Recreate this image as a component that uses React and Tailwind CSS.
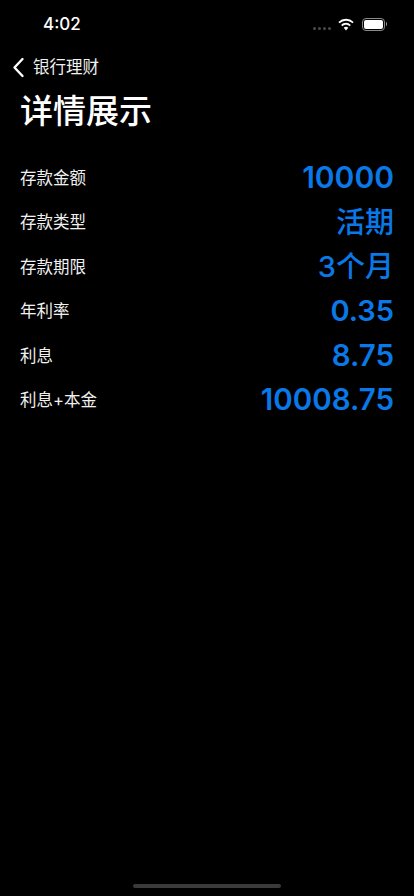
const rows = [
  ['存款金额', '10000', 'text-[30px] font-semibold'],
  ['存款类型', '活期', 'text-[29px] font-medium pt-[2px]'],
  ['存款期限', '3个月', 'text-[29px] font-medium'],
  ['年利率', '0.35', 'text-[29px] font-semibold'],
  ['利息', '8.75', 'text-[29.5px] font-semibold'],
  ['利息+本金', '10008.75', 'text-[29.5px] font-semibold'],
];

const StatusBar = () => (
  <div className="flex h-11 items-center justify-between pl-[43px] pr-[27px] pt-1">
    <span className="text-[17px] font-medium leading-none text-white">4:02</span>
    <div className="flex items-center">
      <div className="mr-[6px] mt-[8px] flex gap-[2px]">
        <span className="h-[3px] w-[3px] rounded-full bg-[#4a4a4a]" />
        <span className="h-[3px] w-[3px] rounded-full bg-[#4a4a4a]" />
        <span className="h-[3px] w-[3px] rounded-full bg-[#4a4a4a]" />
        <span className="h-[3px] w-[3px] rounded-full bg-[#4a4a4a]" />
      </div>
      <svg width="18" height="13" viewBox="0 0 16 11.5" className="mr-[7px]">
        <path d="M8 2.4c2.2 0 4.2.9 5.7 2.3l1.1-1.2A9.9 9.9 0 0 0 8 .7a9.9 9.9 0 0 0-6.8 2.8l1.1 1.2A8.2 8.2 0 0 1 8 2.4z" fill="#fff" />
        <path d="M8 6c1.2 0 2.3.5 3.2 1.3l1.1-1.2A6.2 6.2 0 0 0 8 4.3c-1.7 0-3.2.7-4.3 1.8l1.1 1.2C5.7 6.5 6.8 6 8 6z" fill="#fff" />
        <path d="M8 7.8c-.8 0-1.5.3-2 .8L8 11l2-2.4c-.5-.5-1.2-.8-2-.8z" fill="#fff" />
      </svg>
      <div className="flex items-center">
        <div className="h-[13px] w-[23px] rounded-[4px] border border-[#8a8a8a] p-[1px]">
          <div className="h-full w-full rounded-[2px] bg-white" />
        </div>
        <div className="ml-[1px] h-[4px] w-[1px] rounded-r-sm bg-[#8a8a8a]" />
      </div>
    </div>
  </div>
);

export default function App() {
  return (
    <div
      className="relative flex h-[896px] w-[414px] flex-col overflow-hidden bg-black text-white"
      style={{ fontFamily: 'Inter, "Noto Sans CJK SC", sans-serif' }}
    >
      <StatusBar />
      <div className="mt-[9px] flex h-[28px] items-center pl-[12px]">
        <svg width="13" height="21" viewBox="0 0 13 21" fill="none" stroke="#fff" strokeWidth="2.4" strokeLinecap="round" strokeLinejoin="round">
          <path d="M10.5 2 2.5 10.5l8 8.5" />
        </svg>
        <span className="ml-[8px] text-[16.5px] leading-none text-[#f0f0f0]">银行理财</span>
      </div>
      <h1 className="mt-[5px] pl-[20px] text-[33px] font-medium leading-[50px]">详情展示</h1>
      <div className="mt-[19px] flex flex-col px-[20px]">
        {rows.map(([label, value, size]) => (
          <div key={label} className="flex h-[44.5px] items-center justify-between">
            <span className="pt-[1px] text-[16.5px] leading-none text-[#f0f0f0]">{label}</span>
            <span className={`${size} leading-none text-[#0a78e6]`}>{value}</span>
          </div>
        ))}
      </div>
      <div className="absolute bottom-[8px] left-[133px] h-[4px] w-[148px] rounded-full bg-[#3a3a3a]" />
    </div>
  );
}
